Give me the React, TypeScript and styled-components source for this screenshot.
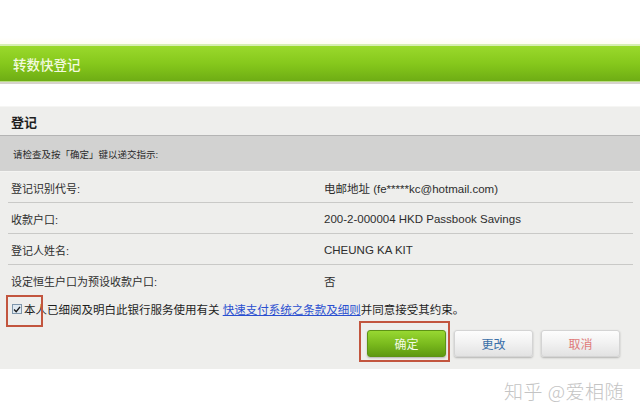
import React from "react";
import styled, { createGlobalStyle } from "styled-components";

const rows = [
  { label: "登记识别代号:", value: "电邮地址 (fe*****kc@hotmail.com)" },
  { label: "收款户口:", value: "200-2-000004 HKD Passbook Savings" },
  { label: "登记人姓名:", value: "CHEUNG KA KIT" },
  { label: "设定恒生户口为预设收款户口:", value: "否" },
];

const GlobalStyle = createGlobalStyle`
  html, body {
    margin: 0;
    padding: 0;
    background: #fff;
  }
  body {
    font-family: "Liberation Sans", "Noto Sans CJK SC", sans-serif;
    color: #2b2b2b;
  }
`;

const App: React.FC = () => {
  return (
    <Page>
      <GlobalStyle />
      <TopSpace />
      <TitleBar>转数快登记</TitleBar>
      <Panel>
        <PanelHeader>登记</PanelHeader>
        <Notice>请检查及按「确定」键以递交指示:</Notice>
        <Rows>
          {rows.map((r, i) => (
            <Row key={i} last={i === rows.length - 1}>
              <Label>{r.label}</Label>
              <Value>{r.value}</Value>
            </Row>
          ))}
        </Rows>
        <AgreeRow>
          <Marker />
          <CheckBox>
            <svg width="9" height="9" viewBox="0 0 9 9">
              <path d="M1.2 4.6 L3.6 7 L7.9 1.6" fill="none" stroke="#1a1a1a" strokeWidth="1.6" />
            </svg>
          </CheckBox>
          <span>
            本人已细阅及明白此银行服务使用有关 <Link>快速支付系统之条款及细则</Link>并同意接受其约束。
          </span>
        </AgreeRow>
        <ButtonRow>
          <Button kind="confirm">确定</Button>
          <Button kind="edit">更改</Button>
          <Button kind="cancel">取消</Button>
        </ButtonRow>
      </Panel>
      <Watermark>知乎 @爱相随</Watermark>
    </Page>
  );
};

const Page = styled.div`
  width: 640px;
  height: 418px;
  overflow: hidden;
  background: #fff;
`;

const TopSpace = styled.div`
  height: 44px;
  background: linear-gradient(#fff 85%, #fffdf3);
`;

const TitleBar = styled.div`
  height: 35px;
  border-top: 2px solid #d6efb2;
  border-bottom: 1px solid #b9dc84;
  box-shadow: 0 2px 0 #d7d3cc;
  background: linear-gradient(#9ad92c, #86c81c 50%, #6ead14);
  color: #f2fadf;
  font-family: "Noto Sans CJK SC", sans-serif;
  font-size: 13.5px;
  font-weight: 500;
  display: flex;
  align-items: center;
  padding-left: 13px;
  margin-bottom: 24px;
`;

const Panel = styled.div`
  background: #eeeeec;
  border-top: 1px solid #f6f6f4;
  padding-bottom: 12px;
`;

const PanelHeader = styled.div`
  height: 28px;
  display: flex;
  align-items: center;
  padding-left: 11px;
  font-family: "Noto Sans CJK SC", sans-serif;
  font-weight: bold;
  font-size: 13px;
  color: #1f1f1f;
  border-bottom: 1px solid #b4b4b4;
`;

const Notice = styled.div`
  height: 35px;
  background: #d2d2d1;
  border-bottom: 1px solid #f4f4f2;
  display: flex;
  align-items: center;
  padding-left: 13px;
  font-size: 9.5px;
  color: #2a2a2a;
`;

const Rows = styled.div`
  display: flex;
  flex-direction: column;
`;

const Row = styled.div<{ last?: boolean }>`
  height: 31px;
  box-sizing: border-box;
  margin: 0 7px 0 8px;
  padding-left: 3px;
  padding-top: ${(p) => (p.last ? "1px" : "2px")};
  display: grid;
  grid-template-columns: 313px 1fr;
  align-items: center;
  color: #2d2d2d;
  border-bottom: ${(p) => (p.last ? "none" : "1px solid #c9c9c7")};
`;

const Label = styled.span`
  font-size: 11px;
`;

const Value = styled.span`
  font-size: 11.5px;
`;

const AgreeRow = styled.div`
  position: relative;
  display: flex;
  align-items: center;
  height: 26px;
  padding-left: 12px;
  font-size: 11.5px;
  color: #1e1e1e;
`;

const CheckBox = styled.span`
  width: 10px;
  height: 10px;
  box-sizing: border-box;
  border: 1px solid #7f96ab;
  background: #dfe9f1;
  display: inline-flex;
  align-items: center;
  justify-content: center;
  margin-right: 2px;
`;

const Marker = styled.div`
  position: absolute;
  left: 6px;
  top: -1px;
  width: 37px;
  height: 32px;
  box-sizing: border-box;
  border: 2px solid #c2553e;
  pointer-events: none;
`;

const Link = styled.span`
  color: #2a4fd0;
  text-decoration: underline;
`;

const ButtonRow = styled.div`
  display: flex;
  justify-content: flex-end;
  gap: 8px;
  padding-right: 20px;
  margin-top: 8px;
`;

const Button = styled.div<{ kind: "confirm" | "edit" | "cancel" }>`
  position: relative;
  width: 79px;
  height: 27px;
  box-sizing: border-box;
  border-radius: 3px;
  display: flex;
  align-items: center;
  justify-content: center;
  font-family: "Noto Sans CJK SC", sans-serif;
  font-size: 12px;
  background: ${(p) =>
    p.kind === "confirm"
      ? "linear-gradient(#98d832, #78b81c 55%, #5e9912)"
      : "linear-gradient(#fdfdfd, #f1f1f1 50%, #e2e2e2)"};
  border: 1px solid ${(p) => (p.kind === "confirm" ? "#5d9315" : "#d4d4d4")};
  box-shadow: 0 1px 2px rgba(0, 0, 0, 0.25);
  color: ${(p) =>
    p.kind === "confirm" ? "#f4fbe6" : p.kind === "edit" ? "#3a6fa8" : "#e07a78"};

  ${(p) =>
    p.kind === "confirm" &&
    `
    &::after {
      content: "";
      position: absolute;
      left: -9px;
      top: -10px;
      right: -5px;
      bottom: -6px;
      border: 2px solid #c2553e;
      pointer-events: none;
    }
  `}
`;

const Watermark = styled.div`
  text-align: right;
  padding-right: 16px;
  margin-top: 10px;
  font-family: "Noto Sans CJK SC", sans-serif;
  font-weight: 300;
  font-size: 19px;
  line-height: 24px;
  color: #c4c4c4;
  letter-spacing: 0.5px;
`;

export default App;
